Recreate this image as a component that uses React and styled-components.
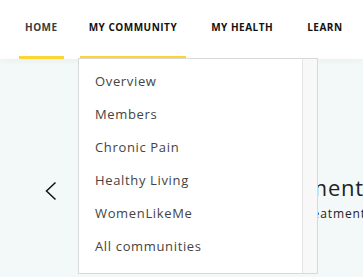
import React from "react";
import styled, { createGlobalStyle } from "styled-components";

const Global = createGlobalStyle`
  html, body { margin: 0; padding: 0; }
  body {
    width: 363px; height: 277px; overflow: hidden;
    background: #f3f9f9;
    font-family: "Open Sans", "Noto Sans", sans-serif;
  }
`;

const Page = styled.div`
  position: relative;
  width: 363px;
  height: 277px;
  overflow: hidden;
  background: #f3f9f9;
`;

const Header = styled.header`
  height: 59px;
  background: #fff;
  display: flex;
  align-items: flex-end;
  padding-left: 19px;
  box-sizing: border-box;
  box-shadow: 0 2px 6px rgba(0, 0, 0, 0.04);
  position: relative;
  z-index: 1;
`;

const Nav = styled.nav`
  display: flex;
  gap: ${(p) => p.$gap}px;
`;

const NavItem = styled.div`
  position: relative;
  height: 59px;
  box-sizing: border-box;
  padding: 0 ${(p) => p.$pad}px;
  display: flex;
  align-items: center;
  padding-bottom: 2px;
  font-size: 10px;
  font-weight: 700;
  letter-spacing: 0.5px;
  color: ${(p) => (p.$muted ? "#3a3a3a" : "#111")};
  border-bottom: 3px solid ${(p) => (p.$active ? "#fcd535" : "transparent")};
  white-space: nowrap;
`;

const Hero = styled.section`
  display: flex;
  align-items: flex-start;
  padding: 114px 0 0 43px;
`;

const Chevron = styled.div`
  width: 16px;
  height: 22px;
  margin-top: 7px;
  display: flex;
  align-items: center;
  justify-content: center;
`;

const HeroText = styled.div`
  margin-left: auto;
  margin-right: -1px;
  text-align: right;
  white-space: nowrap;
`;

const HeroTitle = styled.h1`
  margin: 0;
  font-size: 22px;
  font-weight: 400;
  letter-spacing: 0.8px;
  color: #222;
  line-height: 28px;
`;

const HeroSub = styled.p`
  margin: 5px -2px 0 0;
  font-size: 12px;
  letter-spacing: 0.9px;
  line-height: 16px;
  color: #222;
`;

const Dropdown = styled.div`
  position: absolute;
  left: 78px;
  top: 58px;
  width: 240px;
  height: 216px;
  box-sizing: border-box;
  background: #fff;
  border: 1px solid #d9d9d9;
  display: flex;
  z-index: 2;
`;

const MenuList = styled.ul`
  list-style: none;
  margin: 0;
  padding: 5px 0 0 16px;
  flex: 1;
`;

const MenuItem = styled.li`
  height: 33px;
  display: flex;
  align-items: center;
  font-size: 13px;
  letter-spacing: 0.65px;
  color: #444;
`;

const ScrollTrack = styled.div`
  width: 14px;
  background: #f8f8f8;
  border-left: 1px solid #e6e6e6;
`;

const items = [
  "Overview",
  "Members",
  "Chronic Pain",
  "Healthy Living",
  "WomenLikeMe",
  "All communities",
];

export default function App() {
  return (
    <Page>
      <Global />
      <Header>
        <Nav $gap={16}>
          <NavItem $active $muted $pad={6}>HOME</NavItem>
          <NavItem $active $pad={9}>MY COMMUNITY</NavItem>
          <NavItem $pad={9}>MY HEALTH</NavItem>
          <NavItem $pad={9}>LEARN</NavItem>
        </Nav>
      </Header>
      <Hero>
        <Chevron>
          <svg width="12" height="20" viewBox="0 0 12 20" fill="none">
            <path d="M10.5 1.5 L1.5 10 L10.5 18.5" stroke="#111" strokeWidth="1.5" />
          </svg>
        </Chevron>
        <HeroText>
          <HeroTitle>Pain Management</HeroTitle>
          <HeroSub>Find support for your pain treatment</HeroSub>
        </HeroText>
      </Hero>
      <Dropdown>
        <MenuList>
          {items.map((t) => (
            <MenuItem key={t}>{t}</MenuItem>
          ))}
        </MenuList>
        <ScrollTrack />
      </Dropdown>
    </Page>
  );
}
